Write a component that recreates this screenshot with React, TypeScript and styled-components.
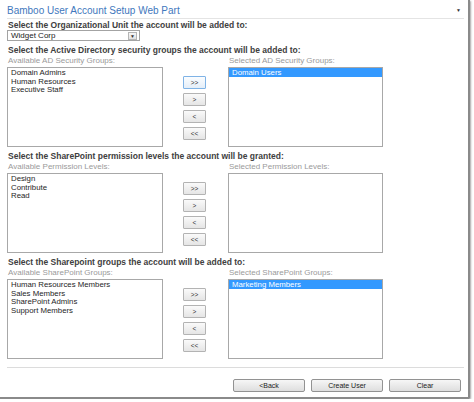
import React from "react";
import styled, { createGlobalStyle } from "styled-components";

const GlobalStyle = createGlobalStyle`
  html, body { margin: 0; padding: 0; background: #ffffff; }
  body { font-family: "Liberation Sans", Arial, sans-serif; }
  * { box-sizing: border-box; }
`;

const Panel = styled.div`
  width: 470px;
  height: 399px;
  padding: 0 4px 0 7px;
  border-right: 2px solid #8a8a8a;
  border-bottom: 2px solid #8a8a8a;
  border-bottom-right-radius: 2px;
  box-shadow: 1px 1px 2px rgba(0, 0, 0, 0.35);
  display: flex;
  flex-direction: column;
`;

const TitleBar = styled.div`
  height: 19px;
  padding-top: 5px;
  border-bottom: 1px solid #e4e4e4;
  display: flex;
  justify-content: space-between;
  align-items: flex-start;
`;

const Title = styled.div`
  font-size: 10px;
  line-height: 11px;
  color: #3f78bd;
`;

const MenuDot = styled.span`
  font-size: 5px;
  line-height: 11px;
  color: #333;
  margin-right: 3px;
`;

const Heading = styled.div`
  font-size: 8.5px;
  line-height: 10px;
  font-weight: bold;
  color: #404040;
  white-space: nowrap;
  padding-left: 1px;
`;

const TopHeading = styled(Heading)`
  margin-top: 1px;
`;

const Dropdown = styled.div`
  width: 133px;
  height: 11px;
  border: 1px solid #a3a3a3;
  display: flex;
  align-items: center;
  justify-content: space-between;
  padding: 0 1px 0 3px;
  font-size: 8px;
  color: #222;
  background: #fff;
`;

const DropArrow = styled.span`
  width: 9px;
  height: 8px;
  border: 1px solid #b5b5b5;
  background: linear-gradient(#f7f7f7, #e2e2e2);
  display: flex;
  align-items: center;
  justify-content: center;
  font-size: 5px;
  color: #333;
  margin-right: 1px;
`;

const Section = styled.section`
  margin-top: 4px;
`;

const LabelRow = styled.div`
  display: flex;
  margin-top: 1px;
`;

const Label = styled.div<{ $w: number }>`
  width: ${(p) => p.$w}px;
  font-size: 8px;
  line-height: 10px;
  color: #9a9a9a;
  padding-left: 1px;
  white-space: nowrap;
`;

const Row = styled.div`
  display: flex;
  margin-top: 1px;
`;

const ListBox = styled.div<{ $w: number }>`
  width: ${(p) => p.$w}px;
  height: 80px;
  border: 1px solid #a8a8a8;
  background: #fff;
  padding: 0;
`;

const Option = styled.div<{ $selected?: boolean }>`
  height: 8.7px;
  line-height: 9px;
  font-size: 7.8px;
  padding-left: 3px;
  white-space: nowrap;
  color: ${(p) => (p.$selected ? "#ffffff" : "#1e1e1e")};
  background: ${(p) => (p.$selected ? "#3399ff" : "transparent")};
`;

const ButtonColumn = styled.div`
  display: flex;
  flex-direction: column;
  gap: 4px;
  padding-top: 9px;
  margin: 0 22px 0 20px;
`;

const MoveButton = styled.button<{ $focus?: boolean }>`
  width: 23px;
  height: 13px;
  padding: 0;
  font-family: "Liberation Sans", Arial, sans-serif;
  font-size: 6.5px;
  line-height: 11px;
  color: #333;
  border: 1px solid ${(p) => (p.$focus ? "#7fb3e6" : "#b3b3b3")};
  border-radius: 1px;
  background: ${(p) =>
    p.$focus ? "linear-gradient(#fbfdff, #e4eef8)" : "linear-gradient(#fafafa, #e5e5e5)"};
`;

const Separator = styled.hr`
  margin: 8px 0 0 0;
  border: 0;
  border-top: 1px solid #dcdcdc;
  height: 0;
`;

const Footer = styled.div`
  display: flex;
  justify-content: flex-end;
  gap: 6px;
  padding-right: 3px;
  margin-top: 11px;
`;

const FooterButton = styled.button`
  width: 72px;
  height: 13px;
  padding: 0;
  font-family: "Liberation Sans", Arial, sans-serif;
  font-size: 7px;
  line-height: 11px;
  color: #222;
  border: 1px solid #929292;
  border-radius: 2px;
  background: linear-gradient(#f6f6f6, #dedede);
`;

type Pair = {
  heading: string;
  leftLabel: string;
  rightLabel: string;
  left: string[];
  right: string[];
  focus?: boolean;
};

const sections: Pair[] = [
  {
    heading: "Select the Active Directory security groups the account will be added to:",
    leftLabel: "Available AD Security Groups:",
    rightLabel: "Selected AD Security Groups:",
    left: ["Domain Admins", "Human Resources", "Executive Staff"],
    right: ["Domain Users"],
    focus: true,
  },
  {
    heading: "Select the SharePoint permission levels the account will be granted:",
    leftLabel: "Available Permission Levels:",
    rightLabel: "Selected Permission Levels:",
    left: ["Design", "Contribute", "Read"],
    right: [],
  },
  {
    heading: "Select the Sharepoint groups the account will be added to:",
    leftLabel: "Available SharePoint Groups:",
    rightLabel: "Selected SharePoint Groups:",
    left: ["Human Resources Members", "Sales Members", "SharePoint Admins", "Support Members"],
    right: ["Marketing Members"],
  },
];

function DualList({ s }: { s: Pair }) {
  return (
    <Section>
      <Heading>{s.heading}</Heading>
      <LabelRow>
        <Label $w={221}>{s.leftLabel}</Label>
        <Label $w={155}>{s.rightLabel}</Label>
      </LabelRow>
      <Row>
        <ListBox $w={156}>
          {s.left.map((t) => (
            <Option key={t}>{t}</Option>
          ))}
        </ListBox>
        <ButtonColumn>
          <MoveButton $focus={s.focus}>&gt;&gt;</MoveButton>
          <MoveButton>&gt;</MoveButton>
          <MoveButton>&lt;</MoveButton>
          <MoveButton>&lt;&lt;</MoveButton>
        </ButtonColumn>
        <ListBox $w={155}>
          {s.right.map((t) => (
            <Option key={t} $selected>
              {t}
            </Option>
          ))}
        </ListBox>
      </Row>
    </Section>
  );
}

export default function App() {
  return (
    <>
      <GlobalStyle />
      <Panel>
        <TitleBar>
          <Title>Bamboo User Account Setup Web Part</Title>
          <MenuDot>▼</MenuDot>
        </TitleBar>
        <TopHeading>Select the Organizational Unit the account will be added to:</TopHeading>
        <Dropdown>
          <span>Widget Corp</span>
          <DropArrow>▼</DropArrow>
        </Dropdown>
        {sections.map((s) => (
          <DualList key={s.heading} s={s} />
        ))}
        <Separator />
        <Footer>
          <FooterButton>&lt;Back</FooterButton>
          <FooterButton>Create User</FooterButton>
          <FooterButton>Clear</FooterButton>
        </Footer>
      </Panel>
    </>
  );
}
